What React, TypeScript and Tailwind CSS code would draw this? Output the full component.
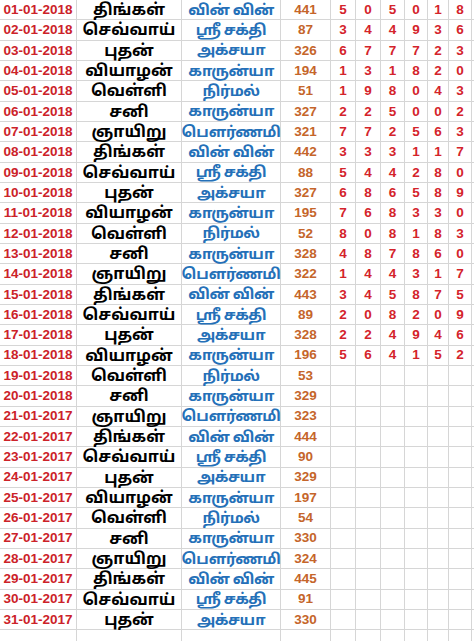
import React from "react";

type Row = [string, string, string, string, string];

const rows: Row[] = [
  ["01-01-2018", "திங்கள்", "வின் வின்", "441", "505018"],
  ["02-01-2018", "செவ்வாய்", "ஸ்ரீ சக்தி", "87", "344936"],
  ["03-01-2018", "புதன்", "அக்சயா", "326", "677723"],
  ["04-01-2018", "வியாழன்", "காருன்யா", "194", "131820"],
  ["05-01-2018", "வெள்ளி", "நிர்மல்", "51", "198043"],
  ["06-01-2018", "சனி", "காருன்யா", "327", "225002"],
  ["07-01-2018", "ஞாயிறு", "பௌர்ணமி", "321", "772563"],
  ["08-01-2018", "திங்கள்", "வின் வின்", "442", "333117"],
  ["09-01-2018", "செவ்வாய்", "ஸ்ரீ சக்தி", "88", "544280"],
  ["10-01-2018", "புதன்", "அக்சயா", "327", "686589"],
  ["11-01-2018", "வியாழன்", "காருன்யா", "195", "768330"],
  ["12-01-2018", "வெள்ளி", "நிர்மல்", "52", "808183"],
  ["13-01-2018", "சனி", "காருன்யா", "328", "487860"],
  ["14-01-2018", "ஞாயிறு", "பௌர்ணமி", "322", "144317"],
  ["15-01-2018", "திங்கள்", "வின் வின்", "443", "345875"],
  ["16-01-2018", "செவ்வாய்", "ஸ்ரீ சக்தி", "89", "208209"],
  ["17-01-2018", "புதன்", "அக்சயா", "328", "224946"],
  ["18-01-2018", "வியாழன்", "காருன்யா", "196", "564152"],
  ["19-01-2018", "வெள்ளி", "நிர்மல்", "53", ""],
  ["20-01-2018", "சனி", "காருன்யா", "329", ""],
  ["21-01-2017", "ஞாயிறு", "பௌர்ணமி", "323", ""],
  ["22-01-2017", "திங்கள்", "வின் வின்", "444", ""],
  ["23-01-2017", "செவ்வாய்", "ஸ்ரீ சக்தி", "90", ""],
  ["24-01-2017", "புதன்", "அக்சயா", "329", ""],
  ["25-01-2017", "வியாழன்", "காருன்யா", "197", ""],
  ["26-01-2017", "வெள்ளி", "நிர்மல்", "54", ""],
  ["27-01-2017", "சனி", "காருன்யா", "330", ""],
  ["28-01-2017", "ஞாயிறு", "பௌர்ணமி", "324", ""],
  ["29-01-2017", "திங்கள்", "வின் வின்", "445", ""],
  ["30-01-2017", "செவ்வாய்", "ஸ்ரீ சக்தி", "91", ""],
  ["31-01-2017", "புதன்", "அக்சயா", "330", ""],
];

const cell = "border-r border-b border-[#d6d6d6] flex items-center justify-center whitespace-nowrap";
const num = "font-['Liberation_Sans',sans-serif] font-bold text-[13.5px] leading-none";
const tamilBase = "font-['Noto_Sans_Tamil','Lohit_Tamil','Latha','Noto_Sans',sans-serif] font-bold leading-none pt-[3px]";

function DataRow({ r }: { r: Row }) {
  const digits = r[4] ? r[4].split("") : ["", "", "", "", "", ""];
  return (
    <div className="grid grid-cols-[77px_105px_99px_50px_25px_25px_24px_23px_21px_23px_2px] h-[20.33px]">
      <div className={`${cell} ${num} text-[#cc2229]`}>{r[0]}</div>
      <div className={`${cell} ${tamilBase} text-[16px] text-black`}>{r[1]}</div>
      <div className={`${cell} ${tamilBase} text-[15px] tracking-[-0.5px] text-[#2470b8]`}>{r[2]}</div>
      <div className={`${cell} ${num} text-[#c5652a]`}>{r[3]}</div>
      {digits.map((d, i) => (
        <div key={i} className={`${cell} ${num} text-[#d4232b]`}>{d}</div>
      ))}
      <div className="border-b border-[#d6d6d6]" />
    </div>
  );
}

export default function App() {
  return (
    <div className="w-[474px] h-[641px] bg-white overflow-hidden">
      {rows.map((r, i) => (
        <DataRow key={i} r={r} />
      ))}
      <div className="grid grid-cols-[77px_105px_99px_50px_25px_25px_24px_23px_21px_23px_2px] h-[11px]">
        {Array.from({ length: 10 }).map((_, i) => (
          <div key={i} className="border-r border-[#d6d6d6]" />
        ))}
        <div />
      </div>
    </div>
  );
}
